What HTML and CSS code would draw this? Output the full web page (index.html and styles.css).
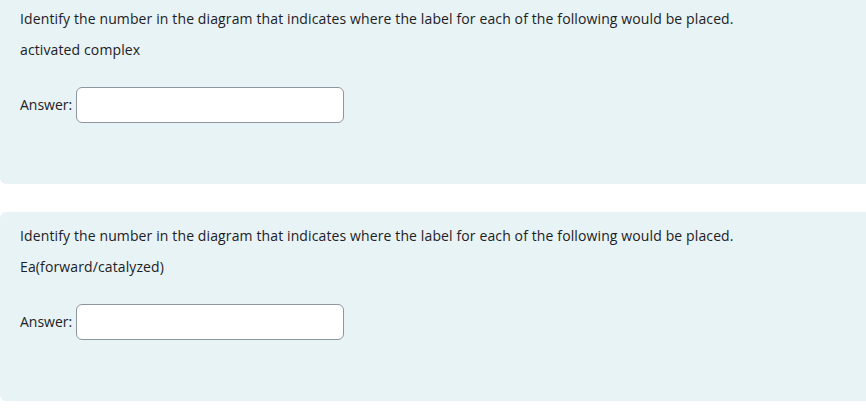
FILE: index.html
```html
<!DOCTYPE html>
<html>
<head>
<meta charset="utf-8">
<link rel="stylesheet" href="styles.css">
</head>
<body>
<div class="que first">
  <p class="qtext">Identify the number in the diagram that indicates where the label for each of the following would be placed.</p>
  <p class="qtext second">activated complex</p>
  <div class="answer">
    <label class="lbl">Answer:</label>
    <input class="field" type="text">
  </div>
</div>
<div class="que">
  <p class="qtext">Identify the number in the diagram that indicates where the label for each of the following would be placed.</p>
  <p class="qtext second">Ea(forward/catalyzed)</p>
  <div class="answer">
    <label class="lbl">Answer:</label>
    <input class="field" type="text">
  </div>
</div>
</body>
</html>
```
FILE: styles.css
```css
html, body {
  margin: 0;
  padding: 0;
  background: #ffffff;
}
body {
  font-family: "Open Sans", "Noto Sans", sans-serif;
  font-size: 14px;
  color: #1d2125;
  overflow: hidden;
}
.que {
  background: #e7f3f5;
  border-radius: 6px;
  margin-right: -10px;
  padding: 13px 20px 61px 20px;
  margin-bottom: 28px;
}
.que.first {
  margin-top: -5px;
}
.qtext {
  margin: 0;
  line-height: 22px;
  letter-spacing: 0.12px;
}
.qtext.second {
  margin-top: 9px;
}
.answer {
  display: flex;
  align-items: center;
  gap: 4px;
  margin-top: 26px;
}
.lbl {
  line-height: 22px;
}
.field {
  box-sizing: border-box;
  width: 268px;
  height: 36px;
  border: 1px solid #8f959e;
  border-radius: 6px;
  background: #fff;
  margin: 0;
  padding: 0 10px;
}
```
